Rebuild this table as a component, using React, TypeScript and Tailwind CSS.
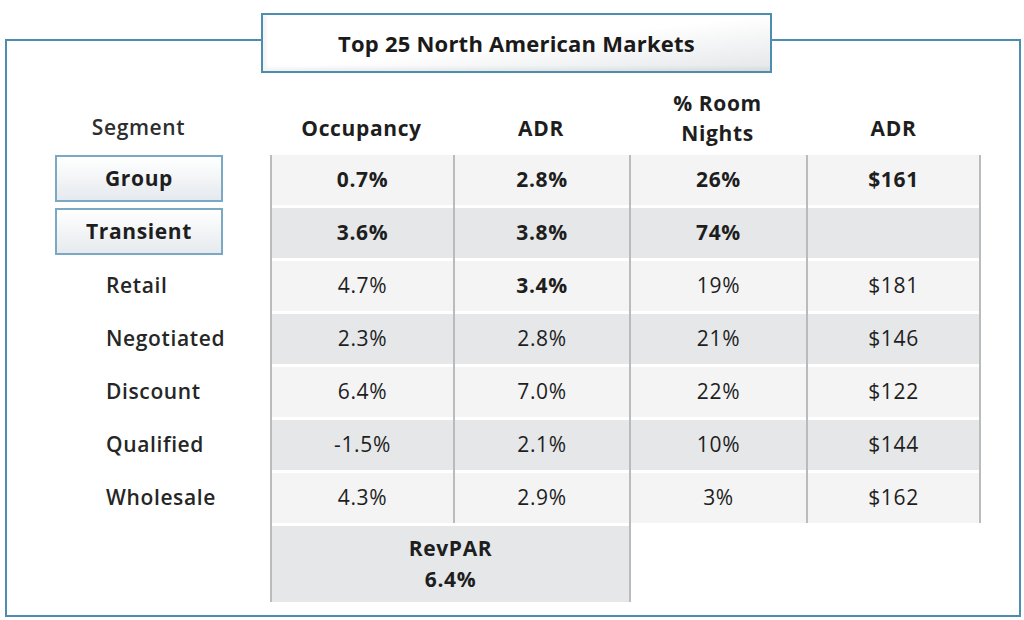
const font = { fontFamily: '"Open Sans", "Noto Sans", sans-serif' };

type Row = {
  label: string;
  boxed?: boolean;
  dark?: boolean;
  first?: boolean;
  values: { v: string; bold?: boolean }[];
};

const rows: Row[] = [
  {
    label: 'Group',
    boxed: true,
    first: true,
    values: [
      { v: '0.7%', bold: true },
      { v: '2.8%', bold: true },
      { v: '26%', bold: true },
      { v: '$161', bold: true },
    ],
  },
  {
    label: 'Transient',
    boxed: true,
    dark: true,
    values: [
      { v: '3.6%', bold: true },
      { v: '3.8%', bold: true },
      { v: '74%', bold: true },
      { v: '' },
    ],
  },
  {
    label: 'Retail',
    values: [{ v: '4.7%' }, { v: '3.4%', bold: true }, { v: '19%' }, { v: '$181' }],
  },
  {
    label: 'Negotiated',
    dark: true,
    values: [{ v: '2.3%' }, { v: '2.8%' }, { v: '21%' }, { v: '$146' }],
  },
  {
    label: 'Discount',
    values: [{ v: '6.4%' }, { v: '7.0%' }, { v: '22%' }, { v: '$122' }],
  },
  {
    label: 'Qualified',
    dark: true,
    values: [{ v: '-1.5%' }, { v: '2.1%' }, { v: '10%' }, { v: '$144' }],
  },
  {
    label: 'Wholesale',
    values: [{ v: '4.3%' }, { v: '2.9%' }, { v: '3%' }, { v: '$162' }],
  },
];

const colWidths = ['w-[183px]', 'w-[176px]', 'w-[177px]', 'w-[175px]'];

const DataRow = ({ row }: { row: Row }) => {
  const bg = row.dark ? 'bg-[#e5e7e9]' : 'bg-[#f4f4f4]';
  // first row has no white gap above it
  const cell = row.first ? 'h-[50px]' : 'h-[53px] pt-[3px]';
  return (
    <div className="flex">
      {/* Segment label */}
      <div className={`w-[263px] ${cell}`}>
        {row.boxed ? (
          <div className="ml-[48px] w-[168px] h-[47px] flex items-center justify-center border-2 border-[#7aa9c4] bg-gradient-to-b from-white to-[#e6eaee] font-bold text-[21px] tracking-[0.03em] text-[#1e1e1e]">
            {row.label}
          </div>
        ) : (
          <div className="ml-[99px] h-full flex items-center font-semibold text-[21px] tracking-[0.03em] text-[#262626]">
            {row.label}
          </div>
        )}
      </div>
      {/* Values */}
      {row.values.map((c, i) => (
        <div
          key={i}
          className={`${colWidths[i]} ${cell} ${i === 3 ? 'border-x-2' : 'border-l-2'} border-[#b9bbbd] bg-clip-content ${bg} flex items-center justify-center text-[21px] tracking-[0.03em] text-[#1e1e1e] ${
            c.bold ? 'font-bold' : 'font-medium'
          }`}
        >
          {c.v}
        </div>
      ))}
    </div>
  );
};

export default function App() {
  return (
    <div className="w-[1024px] h-[620px] bg-white pt-[39px] pl-[5px]" style={font}>
      <div className="w-[1016px] h-[578px] border-2 border-[#4d8db0]">
        {/* Title */}
        <div className="-mt-[28px] ml-[254px] w-[511px] h-[60px] border-2 border-[#4d8db0] bg-gradient-to-br from-white via-white to-[#e4e6e8] shadow-[inset_3px_-3px_4px_rgba(0,0,0,0.06)] flex items-center justify-center font-bold text-[22px] tracking-[0.01em] text-[#1a1a1a]">
          Top 25 North American Markets
        </div>

        {/* Header */}
        <div className="flex items-end h-[82px] text-[21px] tracking-[0.03em] text-[#1e1e1e]">
          <div className="w-[263px] pb-[15px] leading-[26px] text-center font-semibold text-[#2e2e2e]">
            Segment
          </div>
          <div className="w-[183px] pb-[14px] leading-[26px] text-center font-bold">Occupancy</div>
          <div className="w-[176px] pb-[14px] leading-[26px] text-center font-bold">ADR</div>
          <div className="w-[177px] pb-[7px] leading-[30px] text-center font-bold">
            % Room
            <br />
            Nights
          </div>
          <div className="w-[175px] pb-[14px] leading-[26px] text-center font-bold">ADR</div>
        </div>

        {/* Body */}
        {rows.map((r) => (
          <DataRow key={r.label} row={r} />
        ))}

        {/* RevPAR */}
        <div className="flex">
          <div className="w-[263px]" />
          <div className="w-[361px] h-[79px] pt-[3px] border-x-2 border-[#b9bbbd] bg-clip-content bg-[#e5e7e9] flex flex-col items-center justify-center leading-[31px] text-[21px] tracking-[0.03em] font-bold text-[#1e1e1e]">
            <span>RevPAR</span>
            <span>6.4%</span>
          </div>
        </div>
      </div>
    </div>
  );
}
